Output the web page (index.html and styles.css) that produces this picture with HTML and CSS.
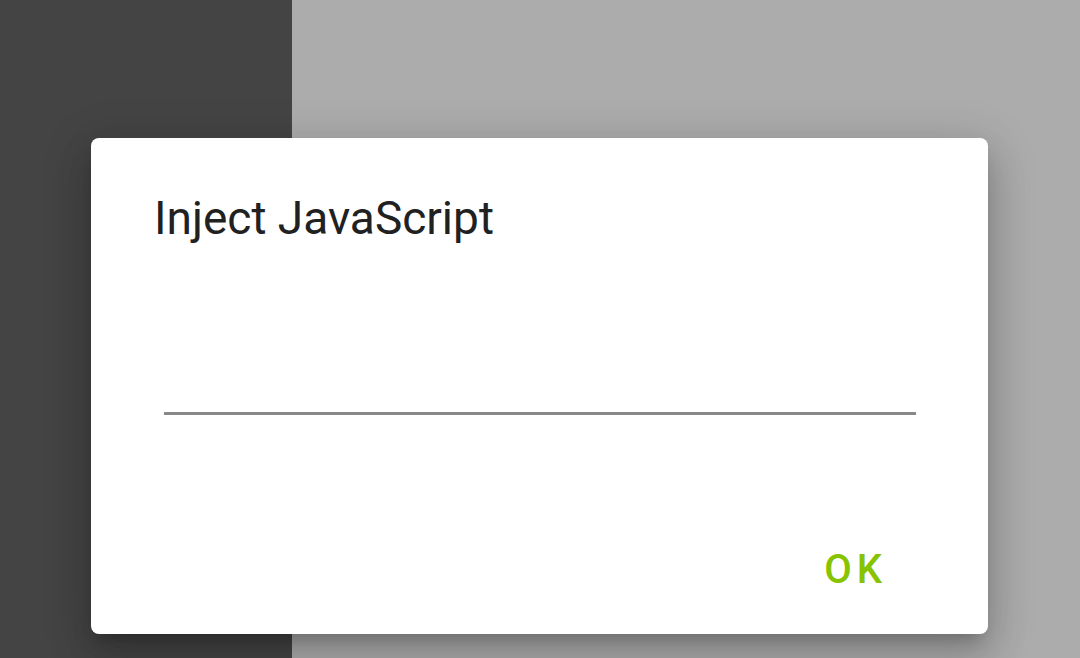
FILE: index.html
```html
<!DOCTYPE html>
<html>
<head>
<meta charset="utf-8">
<link rel="stylesheet" href="styles.css">
</head>
<body>
<div class="screen">
  <div class="left-pane"></div>
  <div class="right-pane"></div>
  <div class="dialog">
    <div class="dialog-title">Inject JavaScript</div>
    <div class="field"></div>
    <div class="actions">
      <span class="btn-ok">OK</span>
    </div>
  </div>
</div>
</body>
</html>
```

FILE: styles.css
```css
html, body {
  margin: 0;
  padding: 0;
}
body {
  font-family: Roboto, "Noto Sans", sans-serif;
  background: #acacac;
}
.screen {
  position: relative;
  width: 1080px;
  height: 658px;
  display: flex;
  overflow: hidden;
}
.left-pane {
  width: 292px;
  background: #444444;
}
.right-pane {
  flex: 1;
  background: #acacac;
}
.dialog {
  position: absolute;
  left: 91px;
  top: 138px;
  width: 897px;
  height: 496px;
  background: #ffffff;
  border-radius: 8px;
  box-shadow: 0 11px 15px -7px rgba(0,0,0,0.2),
              0 24px 38px 3px rgba(0,0,0,0.14),
              0 9px 46px 8px rgba(0,0,0,0.12);
  display: flex;
  flex-direction: column;
  box-sizing: border-box;
  padding-top: 54px;
}
.dialog-title {
  font-size: 46px;
  line-height: 53px;
  color: #212121;
  padding-left: 63px;
}
.field {
  margin: 0 72px 0 73px;
  height: 167px;
  border-bottom: 3px solid #888888;
  box-sizing: content-box;
}
.actions {
  margin-top: 131px;
  display: flex;
  justify-content: flex-end;
  padding-right: 101px;
}
.btn-ok {
  font-size: 40px;
  line-height: 47px;
  font-weight: 500;
  letter-spacing: 5px;
  color: #86c300;
}
```
